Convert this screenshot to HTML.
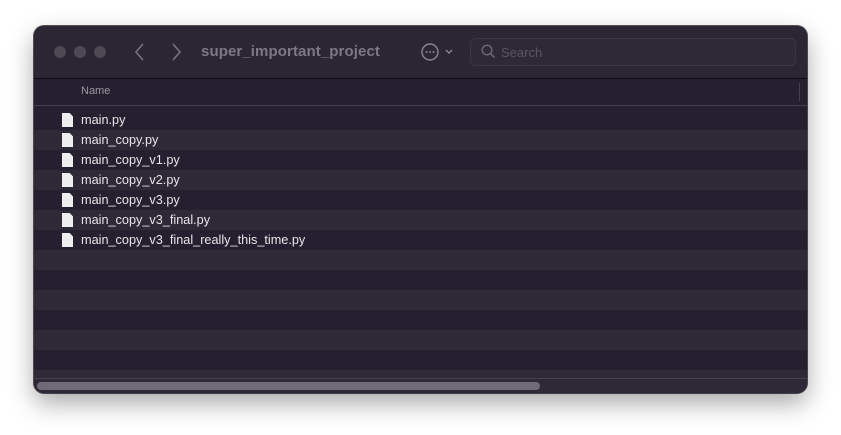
<!DOCTYPE html>
<html><head><style>
body{margin:0;width:841px;height:435px;background:#fff;font-family:"Liberation Sans",sans-serif;overflow:hidden;position:relative}
.win{position:absolute;left:34px;top:26px;width:773px;height:367px;border-radius:10px;background:#252030;overflow:hidden;box-shadow:0 10px 25px rgba(0,0,0,.35),0 0 0 1px #5a5560;}
.tb{position:absolute;left:0;top:0;width:100%;height:52px;background:#2b2634;border-bottom:1px solid #0d0b10}
.dot{position:absolute;top:20px;width:12px;height:12px;border-radius:50%;background:#4d4954}
.title{position:absolute;left:167px;top:17px;font-size:15px;font-weight:bold;color:#7d7884;letter-spacing:0.1px}
.search{position:absolute;left:436px;top:12px;width:324px;height:26px;border:1px solid #3b3644;border-radius:6px;background:#2e2937}
.search span{position:absolute;left:30px;top:6px;font-size:13px;color:#5a5562}
.hdr{position:absolute;left:0;top:53px;width:100%;height:26px;border-bottom:1px solid #45404c}
.hdr span{position:absolute;left:47px;top:6px;font-size:11px;color:#9a96a0}
.rows{position:absolute;left:0;top:84px;width:100%}
.r{height:20px;position:relative;font-size:12.7px;color:#e6e4e8}
.r:nth-child(even){background:#2e2937}
.r span{position:absolute;left:47px;top:3px}
.ic{position:absolute;left:28px;top:3px;width:11px;height:14px;background:#eeeeee;clip-path:polygon(0 0,70% 0,100% 25%,100% 100%,0 100%)}
.sb{position:absolute;left:0;top:352px;width:100%;height:15px;background:#2e2937;border-top:1px solid #45404c}
.th{position:absolute;left:3px;top:3px;width:503px;height:8px;border-radius:4px;background:#6f6a76}
</style></head><body>
<div class="win">
<div class="tb">
<div class="dot" style="left:20px"></div><div class="dot" style="left:40px"></div><div class="dot" style="left:60px"></div>
<svg style="position:absolute;left:100px;top:16px" width="12" height="20"><path d="M9 2L2 10L9 18" stroke="#77727e" stroke-width="1.6" fill="none"/></svg>
<svg style="position:absolute;left:136px;top:16px" width="12" height="20"><path d="M3 2L10 10L3 18" stroke="#77727e" stroke-width="1.6" fill="none"/></svg>
<div class="title">super_important_project</div>
<svg style="position:absolute;left:386px;top:16px" width="40" height="20"><circle cx="10" cy="10" r="8" stroke="#8a8590" stroke-width="1.4" fill="none"/><circle cx="6.5" cy="10" r="1" fill="#8a8590"/><circle cx="10" cy="10" r="1" fill="#8a8590"/><circle cx="13.5" cy="10" r="1" fill="#8a8590"/><path d="M26 8L29 11L32 8" stroke="#8a8590" stroke-width="1.4" fill="none"/></svg>
<div class="search"><svg style="position:absolute;left:10px;top:5px" width="16" height="16"><circle cx="6" cy="6" r="4.8" stroke="#6a6572" stroke-width="1.5" fill="none"/><path d="M9.5 9.5L13.5 13.5" stroke="#6a6572" stroke-width="1.6"/></svg><span>Search</span></div>
</div>
<div class="hdr"><span>Name</span><div style="position:absolute;left:765px;top:4px;width:1px;height:18px;background:#45404c"></div></div>
<div class="rows">
<div class="r"><i class="ic"></i><span>main.py</span></div>
<div class="r"><i class="ic"></i><span>main_copy.py</span></div>
<div class="r"><i class="ic"></i><span>main_copy_v1.py</span></div>
<div class="r"><i class="ic"></i><span>main_copy_v2.py</span></div>
<div class="r"><i class="ic"></i><span>main_copy_v3.py</span></div>
<div class="r"><i class="ic"></i><span>main_copy_v3_final.py</span></div>
<div class="r"><i class="ic"></i><span>main_copy_v3_final_really_this_time.py</span></div>
<div class="r"></div><div class="r"></div><div class="r"></div><div class="r"></div><div class="r"></div><div class="r"></div><div class="r"></div>
</div>
<div class="sb"><div class="th"></div></div>
</div>
</body></html>
